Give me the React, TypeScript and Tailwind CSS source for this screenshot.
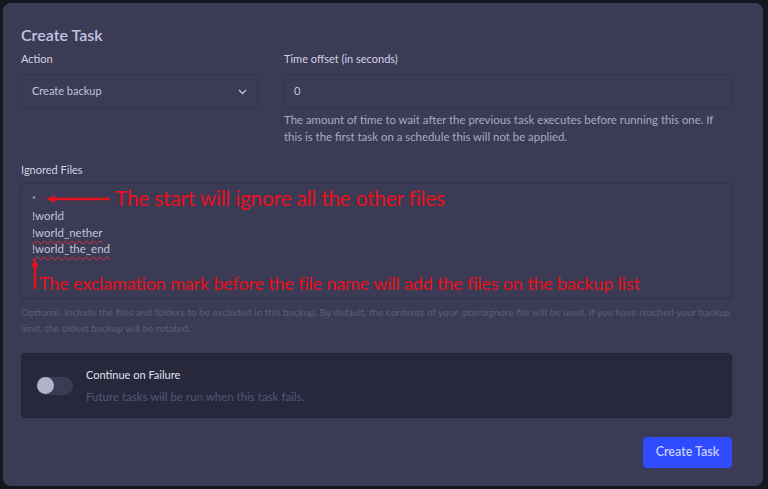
import React from "react";

export default function App() {
  const ui = { fontFamily: "Lato, 'Noto Sans', sans-serif" } as React.CSSProperties;
  return (
    <div className="w-[768px] h-[489px] bg-[#16161f] overflow-hidden pt-[3px] pl-[3px]" style={ui}>
      <div className="w-[760px] h-[483px] rounded-lg bg-[#3b3b55] pl-[18px] pr-[31px] pt-[22px] flex flex-col">
        <h1 className="text-[16px] leading-[20px] font-semibold text-[#c3c3e6]">Create Task</h1>
        <div className="flex gap-[26px] mt-[6px]">
          <div className="w-[237px] flex flex-col">
            <label className="text-[11px] leading-[16px] text-[#d2d2e6]">Action</label>
            <div className="mt-[7px] h-[35px] rounded border border-[#34344d] flex items-center justify-between pl-[10px] pr-[10px] text-[11px] text-[#c4c4da]">
              <span>Create backup</span>
              <svg width="9" height="6" viewBox="0 0 9 6" fill="none"><path d="M1 1l3.5 3.5L8 1" stroke="#c4c4da" strokeWidth="1.3" /></svg>
            </div>
          </div>
          <div className="flex-1 flex flex-col">
            <label className="text-[11px] leading-[16px] text-[#d2d2e6]">Time offset (in seconds)</label>
            <div className="mt-[7px] h-[35px] rounded border border-[#34344d] flex items-center pl-[9px] text-[11px] text-[#c4c4da]">0</div>
            <p className="mt-[2px] pr-[10px] text-[11.4px] leading-[17px] text-[#a9a9c4]">
              The amount of time to wait after the previous task executes before running this one. If this is the first task on a schedule this will not be applied.
            </p>
          </div>
        </div>
        <label className="mt-[17px] text-[11px] leading-[16px] text-[#d2d2e6]">Ignored Files</label>
        <div className="relative mt-[5px] h-[115px] rounded border border-[#34344d] shadow-[0_1px_3px_rgba(0,0,0,0.15)] pl-[10px] pt-[8px] text-[11.5px] leading-[16.3px] text-[#c4c4da]">
          <div className="text-[9px]">*</div>
          <div>!world</div>
          <div><span className="underline decoration-wavy decoration-[#e0303a] decoration-1 underline-offset-[3px]">!world_nether</span></div>
          <div><span className="underline decoration-wavy decoration-[#e0303a] decoration-1 underline-offset-[3px]">!world_the_end</span></div>
          <svg className="absolute left-[24px] top-[10px]" width="66" height="10" viewBox="0 0 66 10">
            <path d="M6 5H64" stroke="#e8101c" strokeWidth="2.4" />
            <path d="M0 5L9 1.5V8.5Z" fill="#e8101c" />
          </svg>
          <span className="absolute left-[93px] top-[1px] text-[20.8px] leading-[26px] text-[#e8101c] tracking-[-0.2px]">The start will ignore all the other files</span>
          <svg className="absolute left-[8px] top-[74px]" width="10" height="32" viewBox="0 0 10 32">
            <path d="M5 6V31" stroke="#e8101c" strokeWidth="2.4" />
            <path d="M5 0L1.5 9H8.5Z" fill="#e8101c" />
          </svg>
          <span className="absolute left-[17px] top-[88px] text-[18.1px] leading-[22px] text-[#e8101c] tracking-[-0.2px]">The exclamation mark before the file name will add the files on the backup list</span>
        </div>
        <p className="mt-[6px] text-[10px] leading-[16px] text-[#5d5d7e]">
          Optional. Include the files and folders to be excluded in this backup. By default, the contents of your .pteroignore file will be used. If you have reached your backup limit, the oldest backup will be rotated.
        </p>
        <div className="mt-[17px] h-[65px] rounded bg-[#28283c] border border-[#25253a] flex items-center pl-[15px]">
          <div className="w-[36px] h-[18px] rounded-full bg-[#3b3b55] relative flex items-center">
            <div className="w-[17px] h-[17px] rounded-full bg-[#b2b2c9]"></div>
          </div>
          <div className="ml-[13px] flex flex-col">
            <span className="text-[11px] leading-[16px] text-[#e2e2ee]">Continue on Failure</span>
            <span className="mt-[6px] text-[11.5px] leading-[16px] text-[#56567a]">Future tasks will be run when this task fails.</span>
          </div>
        </div>
        <div className="mt-[19px] flex justify-end">
          <button className="w-[89px] h-[31px] rounded bg-[#2e4bff] text-[12.5px] font-semibold text-[#c9d0ff]">Create Task</button>
        </div>
      </div>
    </div>
  );
}
